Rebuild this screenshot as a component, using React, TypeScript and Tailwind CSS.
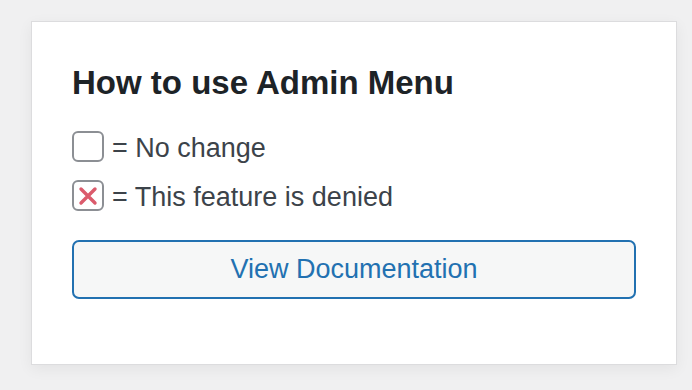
export default function App() {
  return (
    <main className="min-h-[390px] w-full bg-[#f0f0f1] pt-[21px] pl-[31px] font-['Liberation_Sans',Arial,sans-serif]">
      <div className="w-[646px] h-[344px] border border-[#dcdcde] bg-white px-[40px] pt-[41px] shadow-[0_4px_14px_rgba(0,0,0,0.06)]">
        <h2 className="text-[33px] leading-[40px] font-bold text-[#1d2327]">How to use Admin Menu</h2>

        <div className="mt-[28px] flex items-center h-[31px]">
          <span className="h-[31px] w-[32px] rounded-[6px] border-2 border-[#8c8f94] bg-white" />
          <span className="ml-[8px] mt-[4px] text-[27px] leading-[31px] text-[#3c434a]">= No change</span>
        </div>

        <div className="mt-[18px] flex items-center h-[31px]">
          <span className="flex h-[31px] w-[32px] items-center justify-center rounded-[6px] border-2 border-[#8c8f94] bg-white">
            <svg width="20" height="20" viewBox="0 0 20 20">
              <path d="M3 3 L17 17 M17 3 L3 17" stroke="#db5b6c" strokeWidth="3.4" strokeLinecap="round" fill="none" />
            </svg>
          </span>
          <span className="ml-[8px] mt-[4px] text-[27px] leading-[31px] text-[#3c434a]">= This feature is denied</span>
        </div>

        <button className="mt-[29px] flex h-[59px] w-[564px] items-center justify-center rounded-[7px] border-2 border-[#2271b1] bg-[#f6f7f7] text-[27px] text-[#2271b1]">
          View Documentation
        </button>
      </div>
    </main>
  );
}
